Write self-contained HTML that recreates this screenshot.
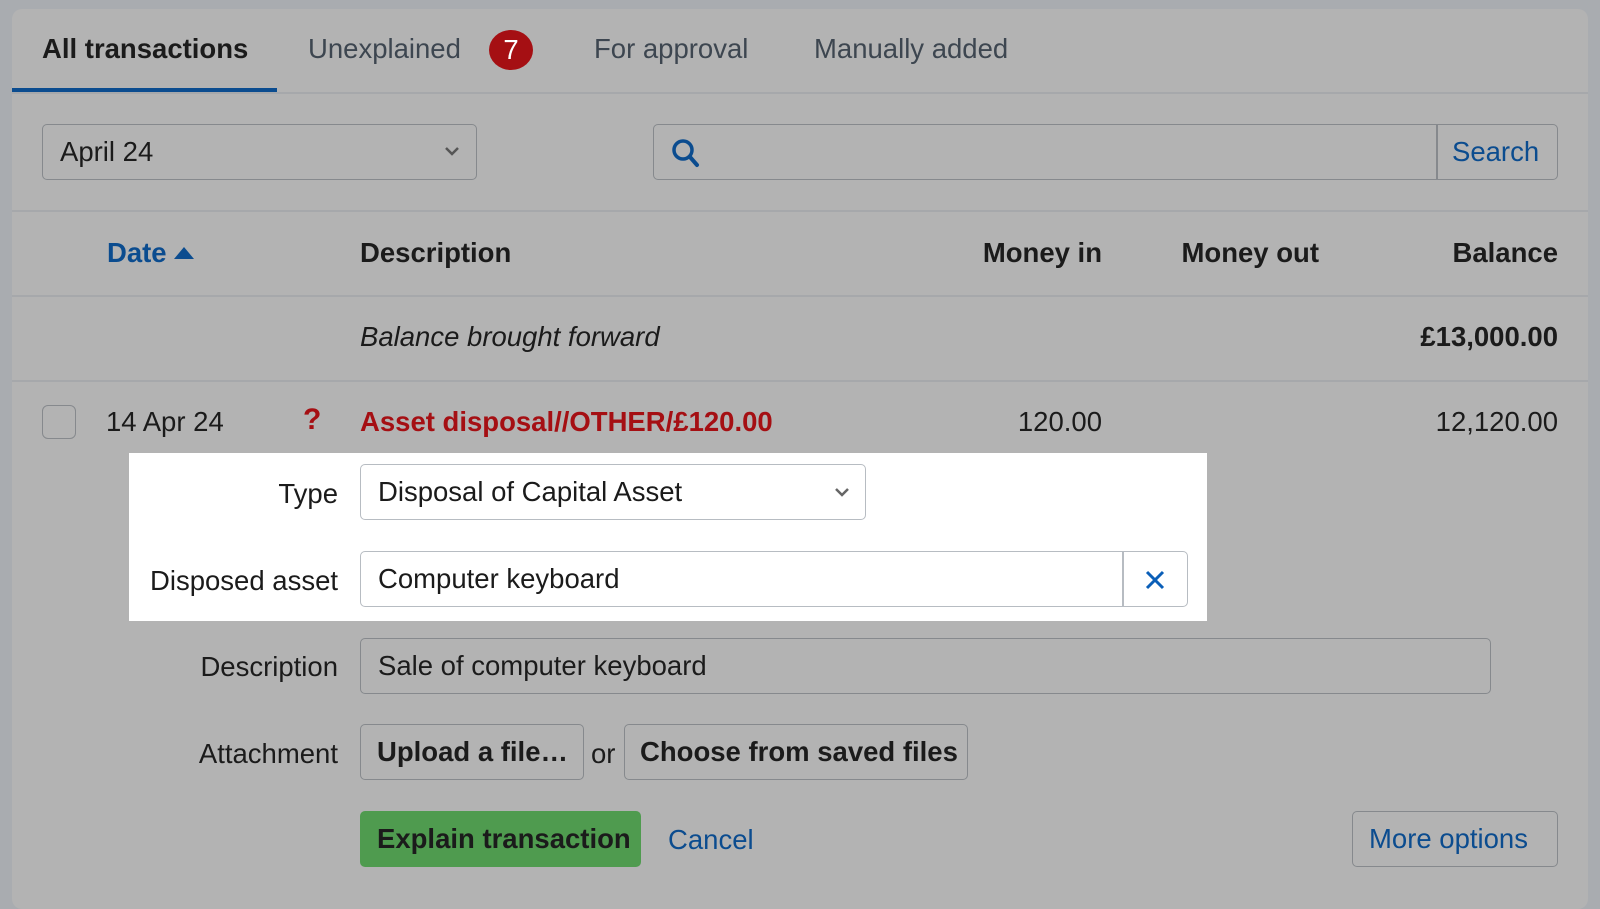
<!DOCTYPE html>
<html><head><meta charset="utf-8"><style>
*{box-sizing:border-box;margin:0;padding:0}
body{width:1600px;height:889px;background:#a9acb0;font-family:"Liberation Sans",sans-serif;color:#1b1b1b;position:relative;overflow:hidden;font-size:27.5px}
.card{position:absolute;left:12px;top:9px;width:1576px;height:900px;background:#b3b3b3;border-radius:10px}
.a{position:absolute;white-space:nowrap}
.line{position:absolute;left:12px;width:1576px;height:2px;background:#a6a8ab}
.box{position:absolute;border:1.5px solid #86898d;border-radius:5px}
.mid{display:flex;align-items:center}
.blue{color:#0b4c8f}
</style></head><body>
<div class="card"></div>
<div class="a" style="left:42px;top:33px;font-weight:bold">All transactions</div>
<div style="position:absolute;left:12px;top:88px;width:265px;height:4px;background:#0b4c8f"></div>
<div class="line" style="top:92px"></div>
<div class="a" style="left:308px;top:33px;color:#3d4650">Unexplained</div>
<div class="a" style="left:489px;top:30px;width:44px;height:40px;border-radius:50%;background:#a50f13;color:#fff;text-align:center;line-height:40px">7</div>
<div class="a" style="left:594px;top:33px;color:#3d4650">For approval</div>
<div class="a" style="left:814px;top:33px;color:#3d4650">Manually added</div>

<div class="box mid" style="left:42px;top:124px;width:435px;height:56px;padding-left:17px">April 24</div>
<svg class="a" style="left:443px;top:144px" width="18" height="14"><path d="M3 4l6 6 6-6" stroke="#555" stroke-width="2.5" fill="none"/></svg>
<div class="box" style="left:653px;top:124px;width:905px;height:56px"></div>
<div style="position:absolute;left:1436px;top:125px;width:1.5px;height:54px;background:#86898d"></div>
<svg class="a" style="left:669px;top:136px" width="34" height="34"><circle cx="14" cy="14" r="9" stroke="#0b4c8f" stroke-width="3.5" fill="none"/><path d="M21 21l7 8" stroke="#0b4c8f" stroke-width="4" stroke-linecap="round"/></svg>
<div class="a blue" style="left:1452px;top:136px">Search</div>
<div class="line" style="top:210px"></div>

<div class="a blue" style="left:107px;top:237px;font-weight:bold">Date</div>
<svg class="a" style="left:173px;top:246px" width="22" height="14"><path d="M1 13L11 1 21 13z" fill="#0b4c8f"/></svg>
<div class="a" style="left:360px;top:237px;font-weight:bold">Description</div>
<div class="a" style="right:498px;top:237px;font-weight:bold">Money in</div>
<div class="a" style="right:281px;top:237px;font-weight:bold">Money out</div>
<div class="a" style="right:42px;top:237px;font-weight:bold">Balance</div>
<div class="line" style="top:295px"></div>

<div class="a" style="left:360px;top:321px;font-style:italic">Balance brought forward</div>
<div class="a" style="right:42px;top:321px;font-weight:bold">£13,000.00</div>
<div class="line" style="top:380px"></div>

<div class="box" style="left:42px;top:405px;width:34px;height:34px;border-radius:6px"></div>
<div class="a" style="left:106px;top:406px">14 Apr 24</div>
<div class="a" style="left:303px;top:403px;color:#a50f13;font-size:30px;font-weight:bold">?</div>
<div class="a" style="left:360px;top:406px;color:#a50f13;font-weight:bold">Asset disposal//OTHER/£120.00</div>
<div class="a" style="right:498px;top:406px">120.00</div>
<div class="a" style="right:42px;top:406px">12,120.00</div>

<div style="position:absolute;left:129px;top:453px;width:1078px;height:168px;background:#fff"></div>
<div class="a" style="right:1262px;top:478px">Type</div>
<div class="box mid" style="left:360px;top:464px;width:506px;height:56px;padding-left:17px;background:#fff;border-color:#b7bcc2">Disposal of Capital Asset</div>
<svg class="a" style="left:833px;top:485px" width="18" height="14"><path d="M3 4l6 6 6-6" stroke="#666" stroke-width="2.5" fill="none"/></svg>
<div class="a" style="right:1262px;top:565px">Disposed asset</div>
<div class="box mid" style="left:360px;top:551px;width:828px;height:56px;padding-left:17px;background:#fff;border-color:#b7bcc2">Computer keyboard</div>
<div style="position:absolute;left:1122px;top:552px;width:1.5px;height:54px;background:#b7bcc2"></div>
<svg class="a" style="left:1144px;top:569px" width="22" height="22"><path d="M3 3l16 16M19 3L3 19" stroke="#0b5fb8" stroke-width="3"/></svg>

<div class="a" style="right:1262px;top:651px">Description</div>
<div class="box mid" style="left:360px;top:638px;width:1131px;height:56px;padding-left:17px">Sale of computer keyboard</div>
<div class="a" style="right:1262px;top:738px">Attachment</div>
<div class="box mid" style="left:360px;top:724px;width:224px;height:56px;padding-left:16px;font-weight:bold">Upload a file…</div>
<div class="a" style="left:591px;top:738px">or</div>
<div class="box mid" style="left:624px;top:724px;width:344px;height:56px;padding-left:15px;font-weight:bold">Choose from saved files</div>

<div class="box mid" style="left:360px;top:811px;width:281px;height:56px;padding-left:16px;font-weight:bold;background:#4f9b4f;border-color:#4f9b4f">Explain transaction</div>
<div class="a blue" style="left:668px;top:824px">Cancel</div>
<div class="box mid blue" style="left:1352px;top:811px;width:206px;height:56px;padding-left:16px">More options</div>
</body></html>
